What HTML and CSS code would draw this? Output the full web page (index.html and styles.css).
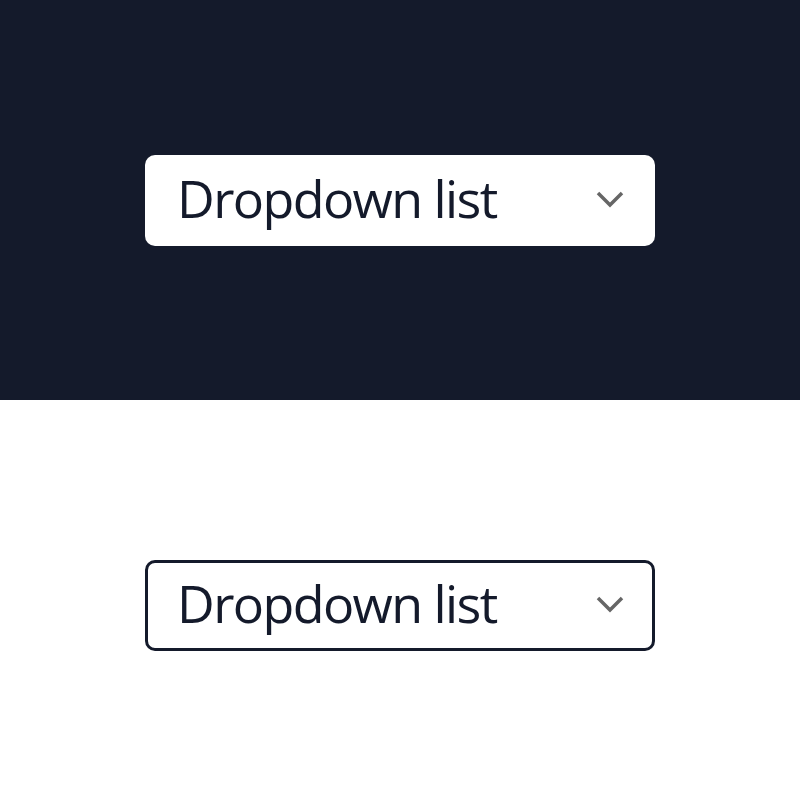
FILE: index.html
```html
<!DOCTYPE html>
<html lang="en">
<head>
  <meta charset="utf-8"/>
  <title>Dropdown list</title>
  <link rel="stylesheet" href="styles.css">
</head>
<body>
  <section class="panel dark">
    <div class="dropdown filled">
      <span class="label">Dropdown list</span>
      <svg class="chevron" width="28" height="18" viewBox="0 0 28 18">
        <path d="M2 2 L14 14 L26 2" fill="none" stroke="#666" stroke-width="3.5"/>
      </svg>
    </div>
  </section>
  <section class="panel light">
    <div class="dropdown outlined">
      <span class="label">Dropdown list</span>
      <svg class="chevron" width="28" height="18" viewBox="0 0 28 18">
        <path d="M2 2 L14 14 L26 2" fill="none" stroke="#666" stroke-width="3.5"/>
      </svg>
    </div>
  </section>
</body>
</html>
```
FILE: styles.css
```css
body {
  margin: 0;
  font-family: 'Open Sans', 'Noto Sans', sans-serif;
}
.panel {
  height: 400px;
  display: flex;
  align-items: center;
  justify-content: center;
  box-sizing: border-box;
}
.dark {
  background-color: #141a2b;
}
.light {
  background-color: #fff;
  padding-top: 10px;
}
.dropdown {
  width: 510px;
  height: 91px;
  box-sizing: border-box;
  border-radius: 10px;
  display: flex;
  align-items: center;
  justify-content: space-between;
  padding: 0 31px 0 32px;
  background-color: #fff;
  color: #141a2b;
}
.outlined {
  border: 3px solid #141a2b;
  padding: 0 28px 0 29px;
}
.label {
  font-size: 52px;
  line-height: 1;
  letter-spacing: -1.6px;
  margin-bottom: 5px;
}
.chevron {
  display: block;
}
```
